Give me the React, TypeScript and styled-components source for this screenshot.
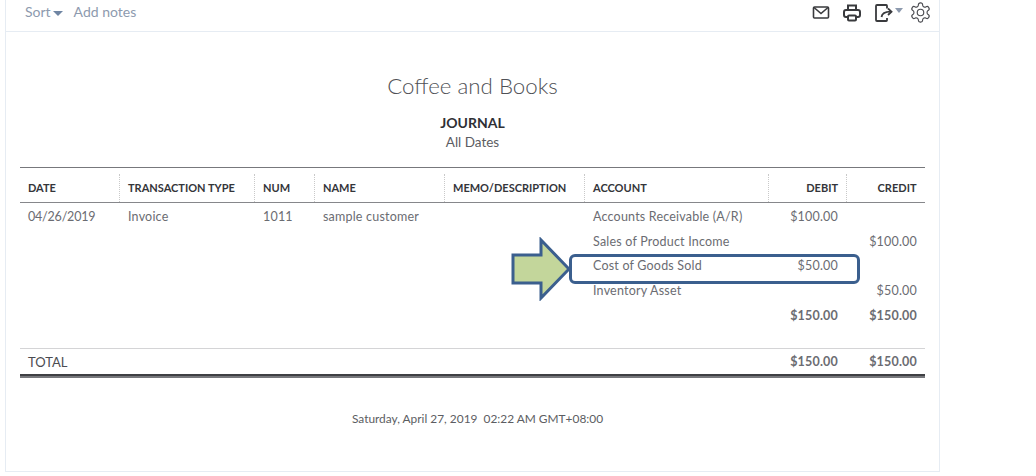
import React from "react";
import styled, { createGlobalStyle } from "styled-components";

const COLUMNS = "100px 135px 60px 130px 140px 184px 78px 78px";

type RowData = {
  date?: string;
  type?: string;
  num?: string;
  name?: string;
  account?: string;
  debit?: string;
  credit?: string;
};

const rows: RowData[] = [
  {
    date: "04/26/2019",
    type: "Invoice",
    num: "1011",
    name: "sample customer",
    account: "Accounts Receivable (A/R)",
    debit: "$100.00",
  },
  { account: "Sales of Product Income", credit: "$100.00" },
  { account: "Cost of Goods Sold", debit: "$50.00" },
  { account: "Inventory Asset", credit: "$50.00" },
];

const headers = ["DATE", "TRANSACTION TYPE", "NUM", "NAME", "MEMO/DESCRIPTION", "ACCOUNT", "DEBIT", "CREDIT"];

const Global = createGlobalStyle`
  html, body {
    margin: 0;
    background: #fff;
  }
  body {
    font-family: Lato, "Open Sans", sans-serif;
    color: #6b6c72;
  }
`;

export default function App() {
  return (
    <S.Page>
      <Global />
      <S.Panel>
        <S.Toolbar>
          <S.Links>
            <S.Link>
              Sort
              <S.Caret />
            </S.Link>
            <S.Link>Add notes</S.Link>
          </S.Links>
          <S.Icons>
            <svg width="18" height="13" viewBox="0 0 18 13" fill="none" stroke="#393a3d" strokeWidth="1.6">
              <rect x="1.500" y="1" width="15" height="11" rx="1" />
              <path d="M2 1.500 9 7.500l7-6" />
            </svg>
            <svg width="18" height="18" viewBox="0 0 18 18" fill="none" stroke="#393a3d" strokeWidth="2">
              <path d="M5 6V1.500h8V6" />
              <rect x="1" y="6" width="16" height="7" rx="2" />
              <rect x="5" y="11.500" width="8" height="5" rx="1" fill="#fff" />
            </svg>
            <S.Share>
              <svg width="18" height="18" viewBox="0 0 18 18" fill="none" stroke="#393a3d" strokeWidth="1.800">
                <path d="M12 4.500V1.800a.8.8 0 0 0-.8-.8H2a1 1 0 0 0-1 1v14a1 1 0 0 0 1 1h9.200a.8.8 0 0 0 .8-.8V14" />
                <path d="M6.500 13c.5-3.500 3.500-5.300 9-5.300" />
                <path d="M13 4.500 16.500 7.700 13 11" />
              </svg>
              <S.ShareCaret />
            </S.Share>
            <svg width="23" height="23" viewBox="0 0 24 24" fill="none" stroke="#4a4b50" strokeWidth="1.200">
              <path d="M12.220 2h-.44a2 2 0 0 0-2 2v.18a2 2 0 0 1-1 1.730l-.43.250a2 2 0 0 1-2 0l-.15-.080a2 2 0 0 0-2.730.730l-.220.380a2 2 0 0 0 .730 2.730l.150.100a2 2 0 0 1 1 1.720v.510a2 2 0 0 1-1 1.740l-.150.090a2 2 0 0 0-.730 2.730l.220.380a2 2 0 0 0 2.730.730l.150-.080a2 2 0 0 1 2 0l.430.250a2 2 0 0 1 1 1.730V20a2 2 0 0 0 2 2h.440a2 2 0 0 0 2-2v-.180a2 2 0 0 1 1-1.730l.430-.250a2 2 0 0 1 2 0l.150.080a2 2 0 0 0 2.730-.730l.220-.390a2 2 0 0 0-.730-2.730l-.150-.080a2 2 0 0 1-1-1.740v-.500a2 2 0 0 1 1-1.740l.150-.090a2 2 0 0 0 .730-2.730l-.220-.380a2 2 0 0 0-2.730-.730l-.150.080a2 2 0 0 1-2 0l-.430-.250a2 2 0 0 1-1-1.730V4a2 2 0 0 0-2-2z" />
              <circle cx="12" cy="12" r="3.400" />
            </svg>
          </S.Icons>
        </S.Toolbar>
        <S.Report>
          <S.Company>Coffee and Books</S.Company>
          <S.Heading>JOURNAL</S.Heading>
          <S.Range>All Dates</S.Range>
          <S.Table>
            <S.HeaderRow>
              {headers.map((h, i) => (
                <S.HeaderCell key={h} $right={i > 5} $last={i === 7}>
                  {h}
                </S.HeaderCell>
              ))}
            </S.HeaderRow>
            <S.Body>
              {rows.map((r, i) => (
                <S.Row key={i}>
                  <S.Cell $tight>{r.date}</S.Cell>
                  <S.Cell>{r.type}</S.Cell>
                  <S.Cell>{r.num}</S.Cell>
                  <S.Cell>{r.name}</S.Cell>
                  <S.Cell />
                  <S.Cell>{r.account}</S.Cell>
                  <S.Cell $right>{r.debit}</S.Cell>
                  <S.Cell $right>{r.credit}</S.Cell>
                </S.Row>
              ))}
              <S.Row>
                <S.Cell $span />
                <S.Cell $right $bold>
                  $150.00
                </S.Cell>
                <S.Cell $right $bold>
                  $150.00
                </S.Cell>
              </S.Row>
            </S.Body>
            <S.TotalRow>
              <S.TotalLabel>TOTAL</S.TotalLabel>
              <S.Cell $right $bold>
                $150.00
              </S.Cell>
              <S.Cell $right $bold>
                $150.00
              </S.Cell>
            </S.TotalRow>
            <S.Callout />
            <S.Arrow width="60" height="64" viewBox="0 0 60 64">
              <path
                d="M2 18h28V3l28 29-28 29V46H2z"
                fill="#c3d69b"
                stroke="#3b5f8e"
                strokeWidth="3"
                strokeLinejoin="miter"
              />
            </S.Arrow>
          </S.Table>
          <S.Stamp>Saturday, April 27, 2019&nbsp;&nbsp;02:22 AM GMT+08:00</S.Stamp>
        </S.Report>
      </S.Panel>
    </S.Page>
  );
}

export const S = {
  Page: styled.div`
    width: 1036px;
    height: 476px;
    overflow: hidden;
    padding-left: 5px;
    box-sizing: border-box;
  `,
  Panel: styled.div`
    width: 935px;
    height: 472px;
    box-sizing: border-box;
    border: 1px solid #e6ecf3;
    border-top: none;
  `,
  Toolbar: styled.div`
    height: 32px;
    box-sizing: border-box;
    border-bottom: 1px solid #e6ecf3;
    display: flex;
    align-items: flex-start;
    justify-content: space-between;
    padding: 3px 7px 0 19px;
  `,
  Links: styled.div`
    display: flex;
    gap: 11px;
  `,
  Link: styled.span`
    font-size: 14px;
    line-height: 18px;
    color: #8d9aae;
    display: inline-flex;
    align-items: center;
    gap: 2px;
  `,
  Caret: styled.i`
    width: 0;
    height: 0;
    margin-top: 2px;
    border-left: 5px solid transparent;
    border-right: 5px solid transparent;
    border-top: 5px solid #6f85a3;
  `,
  Icons: styled.div`
    display: flex;
    align-items: center;
    gap: 13px;
    margin-top: -2px;
  `,
  Share: styled.div`
    display: flex;
    align-items: flex-start;
    gap: 2px;
    margin-left: 1px;
    margin-right: -7px;
  `,
  ShareCaret: styled.i`
    width: 0;
    height: 0;
    margin-top: 4px;
    border-left: 4.500px solid transparent;
    border-right: 4.500px solid transparent;
    border-top: 5px solid #8d9aae;
  `,
  Report: styled.div`
    padding: 40px 14px 0;
  `,
  Company: styled.div`
    font-size: 22.300px;
    font-weight: 300;
    line-height: 28px;
    text-align: center;
    color: #4f5156;
  `,
  Heading: styled.div`
    margin-top: 14px;
    font-size: 14px;
    line-height: 18px;
    font-weight: 700;
    text-align: center;
    color: #2f3035;
  `,
  Range: styled.div`
    margin-top: 1px;
    font-size: 13.500px;
    line-height: 18px;
    text-align: center;
    color: #5c5d62;
  `,
  Table: styled.div`
    position: relative;
    margin-top: 16px;
    width: 905px;
    font-size: 12.500px;
  `,
  HeaderRow: styled.div`
    display: grid;
    grid-template-columns: ${COLUMNS};
    height: 36px;
    box-sizing: border-box;
    border-top: 1px solid #77787c;
    border-bottom: 1px solid #86878b;
    align-items: end;
  `,
  HeaderCell: styled.div<{ $right?: boolean; $last?: boolean }>`
    height: 28px;
    line-height: 28px;
    padding: 0 ${(p) => (p.$last ? 8.5 : 8)}px 0 8px;
    font-size: 11px;
    font-weight: 700;
    color: #34353a;
    text-align: ${(p) => (p.$right ? "right" : "left")};
    border-right: ${(p) => (p.$last ? "none" : "1px dotted #c9c9c9")};
    box-sizing: border-box;
    white-space: nowrap;
  `,
  Body: styled.div`
    padding-top: 1px;
    height: 146px;
    box-sizing: border-box;
    border-bottom: 1px solid #d4d4d6;
  `,
  Row: styled.div`
    display: grid;
    grid-template-columns: ${COLUMNS};
    height: 24.700px;
    align-items: center;
  `,
  Cell: styled.div<{ $right?: boolean; $bold?: boolean; $span?: boolean; $tight?: boolean }>`
    padding: 0 ${(p) => (p.$right ? 9 : 8)}px 0 8px;
    white-space: nowrap;
    letter-spacing: ${(p) => (p.$tight ? -0.2 : 0.2)}px;
    text-align: ${(p) => (p.$right ? "right" : "left")};
    font-weight: ${(p) => (p.$bold ? 700 : 400)};
    ${(p) => p.$span && "grid-column: 1 / 7;"}
    &:last-child {
      padding-right: 8px;
    }
  `,
  TotalRow: styled.div`
    display: grid;
    grid-template-columns: 749px 78px 78px;
    height: 27px;
    box-sizing: border-box;
    align-items: center;
    border-bottom: 2px solid #3f4044;
    box-shadow: 0 2px 0 #77787c;
  `,
  TotalLabel: styled.div`
    padding: 0 8px;
    font-size: 13px;
    color: #4b4c51;
  `,
  Callout: styled.div`
    position: absolute;
    left: 549px;
    top: 87px;
    width: 291px;
    height: 30px;
    box-sizing: border-box;
    border: 3px solid #3b5f8e;
    border-radius: 6px;
  `,
  Arrow: styled.svg`
    position: absolute;
    left: 491px;
    top: 70px;
  `,
  Stamp: styled.div`
    margin-top: 35px;
    padding-left: 10px;
    text-align: center;
    font-size: 11.900px;
    line-height: 16px;
    color: #5c5d62;
  `,
};
